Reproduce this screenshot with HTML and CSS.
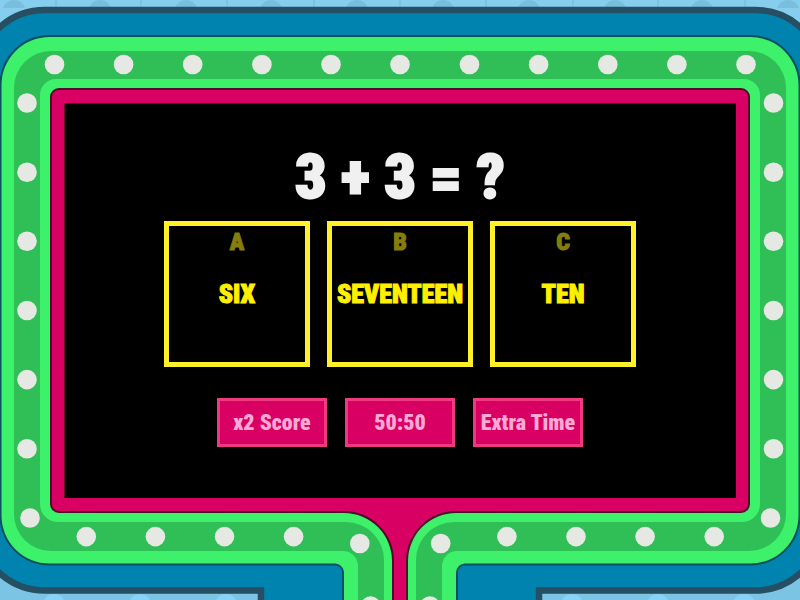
FILE: index.html
```html
<!DOCTYPE html>
<html lang="en">
<head>
<meta charset="utf-8">
<meta name="viewport" content="width=device-width, initial-scale=1">
<title>Gameshow quiz</title>
<link rel="stylesheet" href="styles.css">
</head>
<body>
<svg class="marquee" viewBox="0 0 800 600" preserveAspectRatio="xMidYMid slice" aria-hidden="true">
  <defs>
    <path id="seam" d="M0 0V8"/>
    <path id="scallop" d="M-11 0Q-8 -8 0 -8T11 0Z"/>
    <circle id="bulb" r="9.8"/>
    <g id="side-bulbs">
      <use href="#bulb" x="54.5" y="64.5"/><use href="#bulb" x="123.6" y="64.5"/><use href="#bulb" x="192.7" y="64.5"/><use href="#bulb" x="261.9" y="64.5"/><use href="#bulb" x="331" y="64.5"/>
      <use href="#bulb" x="27" y="103"/><use href="#bulb" x="27" y="172.2"/><use href="#bulb" x="27" y="241.3"/><use href="#bulb" x="27" y="310.5"/><use href="#bulb" x="27" y="379.6"/><use href="#bulb" x="27" y="448.8"/><use href="#bulb" x="30" y="518"/>
      <use href="#bulb" x="86.3" y="536.6"/><use href="#bulb" x="155.4" y="536.6"/><use href="#bulb" x="224.5" y="536.6"/><use href="#bulb" x="293.6" y="536.6"/><use href="#bulb" x="359.8" y="543.5"/><use href="#bulb" x="370.6" y="606"/>
    </g>
    <path id="tube" fill-rule="evenodd" d="M50 37H750A48 48 0 0 1 798.5 85V515A48 48 0 0 1 750 563.5H465A9 9 0 0 0 456 572.5V610H408V561A48 48 0 0 1 456 513H741A9 9 0 0 0 750 504V97A9 9 0 0 0 741 88H59A9 9 0 0 0 50 97V504A9 9 0 0 0 59 513H344A48 48 0 0 1 392 561V610H344V572.5A9 9 0 0 0 335 563.5H50A48 48 0 0 1 1.5 515V85A48 48 0 0 1 50 37Z"/>
  </defs>
  <rect class="sky" width="800" height="600"/>
  <rect class="sky-low" y="500" width="800" height="100"/>
  <g class="scallops">
    <use href="#scallop" x="14" y="8"/><use href="#scallop" x="100" y="8"/><use href="#scallop" x="186" y="8"/><use href="#scallop" x="271" y="8"/><use href="#scallop" x="357" y="8"/><use href="#scallop" x="443" y="8"/><use href="#scallop" x="529" y="8"/><use href="#scallop" x="615" y="8"/><use href="#scallop" x="702" y="8"/><use href="#scallop" x="788" y="8"/>
  </g>
  <g class="seams">
    <use href="#seam" x="56"/><use href="#seam" x="141"/><use href="#seam" x="227"/><use href="#seam" x="314"/><use href="#seam" x="400"/><use href="#seam" x="486"/><use href="#seam" x="573"/><use href="#seam" x="658"/><use href="#seam" x="745"/>
  </g>
  <g class="scallops-low">
    <use href="#scallop" x="54" y="602"/><use href="#scallop" x="140" y="602"/><use href="#scallop" x="226" y="602"/><use href="#scallop" x="572" y="602"/><use href="#scallop" x="658" y="602"/><use href="#scallop" x="744" y="602"/>
  </g>
  <path class="casing" d="M45 10H755A68 68 0 0 1 823 78V523A68 68 0 0 1 755 590.5H539V610H261V590.5H45A68 68 0 0 1 -23 523V78A68 68 0 0 1 45 10Z"/>
  <use class="tube-edge" href="#tube"/>
  <path class="red" d="M59 88H741A9 9 0 0 1 750 97V504A9 9 0 0 1 741 513H456A48 48 0 0 0 408 561V610H392V561A48 48 0 0 0 344 513H59A9 9 0 0 1 50 504V97A9 9 0 0 1 59 88Z"/>
  <use class="tube" href="#tube"/>
  <path class="track" fill-rule="evenodd" d="M51 51H749A37 37 0 0 1 786 88V514A37 37 0 0 1 749 551H457A15 15 0 0 0 442 566V610H416V560A38 38 0 0 1 454 522H742A18 18 0 0 0 760 504V95A16 16 0 0 0 744 79H56A16 16 0 0 0 40 95V504A18 18 0 0 0 58 522H346A38 38 0 0 1 384 560V610H358V566A15 15 0 0 0 343 551H51A37 37 0 0 1 14 514V88A37 37 0 0 1 51 51Z"/>
  <rect class="screen" x="64.5" y="103.5" width="671.5" height="394.5"/>
  <g class="bulbs">
    <use href="#side-bulbs"/>
    <use href="#side-bulbs" transform="translate(800.5 0) scale(-1 1)"/>
    <use href="#bulb" x="400" y="64.5"/>
  </g>
</svg>
<main class="quiz">
  <h1 class="question">3 + 3 = ?</h1>
  <div class="answers">
    <button class="answer" type="button"><span class="letter">A</span><span class="text">SIX</span></button>
    <button class="answer" type="button"><span class="letter">B</span><span class="text">SEVENTEEN</span></button>
    <button class="answer" type="button"><span class="letter">C</span><span class="text">TEN</span></button>
  </div>
  <div class="lifelines">
    <button class="lifeline" type="button">x2 Score</button>
    <button class="lifeline" type="button">50:50</button>
    <button class="lifeline" type="button">Extra Time</button>
  </div>
</main>
</body>
</html>
```
FILE: styles.css
```css
* {
  box-sizing: border-box;
}

body {
  margin: 0;
  min-height: 100vh;
  display: flex;
  overflow: hidden;
  background: #87ceee;
  font-family: "Roboto Condensed", Roboto, sans-serif;
  font-weight: 900;
}

/* Marquee illustration behind the quiz */
.marquee {
  position: absolute;
  inset: 0;
  width: 100%;
  height: 100%;
}

.sky { fill: #87ceee; }
.sky-low { fill: #7bc4e4; }
.scallops { fill: #79bfdd; }
.scallops-low { fill: #87d2f5; }
.seams { stroke: #7cc3e2; stroke-width: 2; }
.casing { fill: #0083ae; stroke: #264f63; stroke-width: 6.5; }
.tube-edge { fill: none; stroke: #08505f; stroke-width: 4; }
.red { fill: #d90064; stroke: #4f0c2a; stroke-width: 4; }
.tube { fill: #3df16b; }
.track { fill: #30bf57; }
.screen { fill: #000; }
.bulbs { fill: #e6e8e3; }

/* Quiz content */
.quiz {
  position: relative;
  flex: 1;
  display: flex;
  flex-direction: column;
  align-items: center;
  justify-content: center;
  padding-bottom: 12px;
}

.question {
  margin: 0 0 8px;
  color: #f0f0f0;
  font-size: 62px;
  line-height: 72px;
  font-weight: 900;
  -webkit-text-stroke: 2px #f0f0f0;
}

.answers {
  display: flex;
  gap: 17px;
  margin-bottom: 31px;
}

.answer {
  width: 146px;
  height: 146px;
  padding: 0;
  display: grid;
  grid-template-rows: 32px 72px 32px;
  align-items: center;
  justify-items: center;
  border: 5px solid #fff02a;
  background: #000;
  color: #fff000;
  font: inherit;
  font-size: 26px;
}

.text {
  -webkit-text-stroke: 1px #fff000;
}

.letter {
  color: #857d0c;
  font-size: 24px;
  -webkit-text-stroke: 1px #857d0c;
}

.lifelines {
  display: flex;
  gap: 18px;
}

.lifeline {
  width: 110px;
  height: 49px;
  padding: 0;
  border: 3px solid #ef3a82;
  background: #d90064;
  color: #ffa9d5;
  font: inherit;
  font-size: 22px;
}
```
